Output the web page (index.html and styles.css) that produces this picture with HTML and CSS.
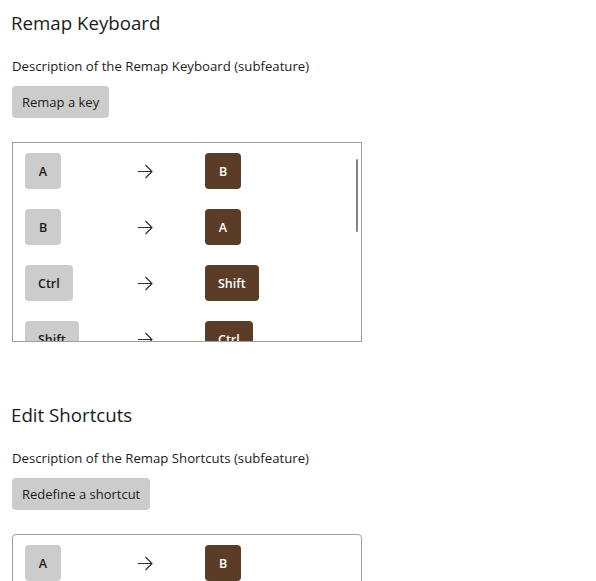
FILE: index.html
```html
<!DOCTYPE html>
<html lang="en">
<head>
<meta charset="utf-8">
<title>Keyboard Manager</title>
<link rel="stylesheet" href="styles.css">
</head>
<body>
<main class="page">
  <section class="feature">
    <h2 class="title">Remap Keyboard</h2>
    <p class="desc">Description of the Remap Keyboard (subfeature)</p>
    <button class="btn" type="button">Remap a key</button>
    <div class="list list-square">
      <div class="row">
        <span class="key key-from">A</span>
        <svg class="arrow" width="16" height="16" viewBox="0 0 16 16"><path d="M1 8.5H15M8.5 2L15 8.5L8.5 15" fill="none" stroke="#2b2b2b" stroke-width="1.1"/></svg>
        <span class="key key-to">B</span>
      </div>
      <div class="row">
        <span class="key key-from">B</span>
        <svg class="arrow" width="16" height="16" viewBox="0 0 16 16"><path d="M1 8.5H15M8.5 2L15 8.5L8.5 15" fill="none" stroke="#2b2b2b" stroke-width="1.1"/></svg>
        <span class="key key-to">A</span>
      </div>
      <div class="row">
        <span class="key key-from">Ctrl</span>
        <svg class="arrow" width="16" height="16" viewBox="0 0 16 16"><path d="M1 8.5H15M8.5 2L15 8.5L8.5 15" fill="none" stroke="#2b2b2b" stroke-width="1.1"/></svg>
        <span class="key key-to">Shift</span>
      </div>
      <div class="row">
        <span class="key key-from">Shift</span>
        <svg class="arrow" width="16" height="16" viewBox="0 0 16 16"><path d="M1 8.5H15M8.5 2L15 8.5L8.5 15" fill="none" stroke="#2b2b2b" stroke-width="1.1"/></svg>
        <span class="key key-to">Ctrl</span>
      </div>
      <div class="scrollbar"></div>
    </div>
  </section>
  <section class="feature feature-next">
    <h2 class="title">Edit Shortcuts</h2>
    <p class="desc">Description of the Remap Shortcuts (subfeature)</p>
    <button class="btn" type="button">Redefine a shortcut</button>
    <div class="list list-round">
      <div class="row">
        <span class="key key-from">A</span>
        <svg class="arrow" width="16" height="16" viewBox="0 0 16 16"><path d="M1 8.5H15M8.5 2L15 8.5L8.5 15" fill="none" stroke="#2b2b2b" stroke-width="1.1"/></svg>
        <span class="key key-to">B</span>
      </div>
      <div class="row">
        <span class="key key-from">B</span>
        <svg class="arrow" width="16" height="16" viewBox="0 0 16 16"><path d="M1 8.5H15M8.5 2L15 8.5L8.5 15" fill="none" stroke="#2b2b2b" stroke-width="1.1"/></svg>
        <span class="key key-to">A</span>
      </div>
    </div>
  </section>
</main>
</body>
</html>
```

FILE: styles.css
```css
html, body {
  margin: 0;
  padding: 0;
  background: #ffffff;
}
body {
  font-family: "Open Sans", "Noto Sans", sans-serif;
  color: #1b1b1b;
  overflow: hidden;
  height: 581px;
}
.page {
  padding: 11px 12px 0 12px;
}
.feature {
  display: flex;
  flex-direction: column;
  align-items: flex-start;
}
.feature-next {
  margin-top: 61px;
}
.title {
  margin: 0 0 0 -1px;
  font-size: 18.7px;
  line-height: 24px;
  font-weight: 400;
}
.desc {
  margin: 21px 0 0 0;
  font-size: 13.2px;
  line-height: 20px;
}
.btn {
  margin-top: 10px;
  height: 32px;
  padding: 0 10px;
  border: none;
  border-radius: 4px;
  background: #cccccc;
  color: #1b1b1b;
  font-family: inherit;
  font-size: 13px;
}
.list {
  position: relative;
  margin-top: 24px;
  box-sizing: border-box;
  width: 350px;
  height: 200px;
  border: 1px solid #9e9e9e;
  padding: 10px 12px 0 12px;
  display: flex;
  flex-direction: column;
  gap: 20px;
  overflow: hidden;
  flex-shrink: 0;
}
.list-round {
  border-radius: 4px;
}
.row {
  display: grid;
  grid-template-columns: 112px 68px auto;
  align-items: center;
  justify-items: start;
}
.arrow {
  display: block;
}
.key {
  box-sizing: border-box;
  min-width: 36px;
  height: 36px;
  padding: 0 13px;
  border-radius: 4px;
  display: inline-flex;
  align-items: center;
  justify-content: center;
  font-size: 12.5px;
  font-weight: 600;
}
.key-from {
  background: #cccccc;
  color: #1b1b1b;
}
.key-to {
  background: #5a3c27;
  color: #ffffff;
}
.scrollbar {
  position: absolute;
  right: 3px;
  top: 16px;
  width: 2px;
  height: 73px;
  border-radius: 1px;
  background: #868686;
}
```
